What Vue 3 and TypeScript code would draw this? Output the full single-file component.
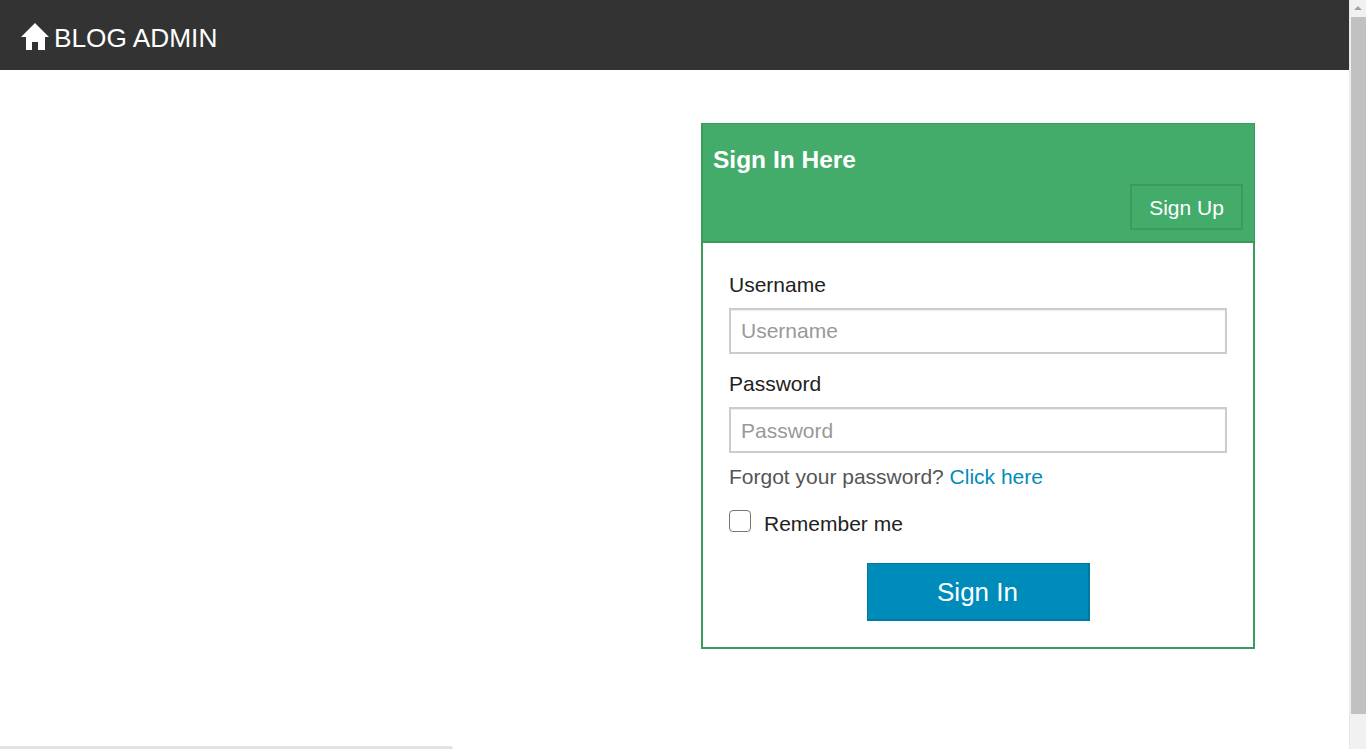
<template>
  <div class="page">
    <div class="content">
      <nav class="navbar">
        <a class="brand" href="#">
          <svg class="home" viewBox="0 0 28 27" aria-hidden="true">
            <path d="M14 0 L28 14 L24 14 L24 27 L17 27 L17 19 L11 19 L11 27 L5 27 L5 14 L0 14 Z" />
          </svg>
          <span>BLOG ADMIN</span>
        </a>
      </nav>

      <main class="main">
        <section class="card">
          <header class="card-head">
            <h3 class="card-title">Sign In Here</h3>
            <div class="head-actions">
              <a class="btn-signup" href="#">Sign Up</a>
            </div>
          </header>

          <form class="card-body" @submit.prevent>
            <label class="label" for="username">Username</label>
            <input id="username" v-model="username" class="input" type="text" placeholder="Username" />

            <label class="label label-pass" for="password">Password</label>
            <input id="password" v-model="password" class="input input-pass" type="password" placeholder="Password" />

            <p class="forgot">Forgot your password? <a href="#">Click here</a></p>

            <label class="remember">
              <input v-model="remember" class="check" type="checkbox" />
              <span>Remember me</span>
            </label>

            <div class="actions">
              <button class="btn-signin" type="submit">Sign In</button>
            </div>
          </form>
        </section>
      </main>

      <div class="footer-strip"></div>
    </div>

    <!-- page scrollbar as it shows in the screenshot -->
    <aside class="scrollbar">
      <span class="arrow"></span>
      <span class="thumb"></span>
    </aside>
  </div>
</template>

<script setup lang="ts">
import { ref } from 'vue';

const username = ref('');
const password = ref('');
const remember = ref(false);
</script>

<style>
html,
body {
  margin: 0;
  overflow: hidden;
}
</style>

<style scoped>
.page {
  display: flex;
  height: 749px;
  font-family: "Liberation Sans", Arial, sans-serif;
  color: #222;
  background: #fff;
  overflow: hidden;
}

.content {
  display: flex;
  flex: 1;
  flex-direction: column;
  min-width: 0;
}

.navbar {
  display: flex;
  align-items: center;
  height: 70px;
  padding-left: 21px;
  background: #333;
}

.brand {
  display: flex;
  align-items: center;
  gap: 5px;
  margin-top: 6px;
  color: #fff;
  font-size: 26.25px;
  text-decoration: none;
}

.home {
  width: 28px;
  height: 27px;
  margin-top: -3px;
  fill: #fff;
}

.main {
  display: flex;
  flex: 1;
  justify-content: flex-end;
  align-items: flex-start;
  padding: 53px 94px 0 0;
}

.card {
  width: 554px;
  box-sizing: border-box;
  border: 2px solid #3c9a5f;
  border-top-width: 1px;
}

.card-head {
  height: 119px;
  box-sizing: border-box;
  margin-right: -1px;
  padding: 10px 11px 10px 10px;
  border-bottom: 2px solid #3c9a5f;
  background: #43ac6a;
  color: #fff;
}

.card-title {
  margin: 14px 0 0;
  font-size: 24.5px;
  line-height: 24px;
  font-weight: 700;
}

.head-actions {
  display: flex;
  justify-content: flex-end;
  margin-top: 12px;
}

.btn-signup {
  box-sizing: border-box;
  width: 113px;
  height: 46px;
  border: 2px solid #3c9a5f;
  color: #fff;
  font-size: 21px;
  line-height: 44px;
  text-align: center;
  text-decoration: none;
}

.card-body {
  display: flex;
  flex-direction: column;
  padding: 30px 26px 26px;
}

.label {
  font-size: 21px;
  line-height: 24px;
}

.label-pass {
  margin-top: 18px;
}

.input {
  box-sizing: border-box;
  width: 100%;
  height: 46px;
  margin-top: 11px;
  padding: 0 10px;
  border: 2px solid #ccc;
  border-radius: 0;
  outline: none;
  box-shadow: inset 0 1px 1px rgba(0, 0, 0, 0.075);
  color: #222;
  font-family: inherit;
  font-size: 21px;
}

.input-pass {
  padding-top: 2px;
}

.input::placeholder {
  color: #999;
  opacity: 1;
}

.forgot {
  margin: 10px 0 0;
  color: #555;
  font-size: 21px;
  line-height: 28px;
}

.forgot a {
  color: #008cba;
  text-decoration: none;
}

.remember {
  display: flex;
  align-items: flex-start;
  gap: 13px;
  margin-top: 19px;
  font-size: 21px;
  line-height: 24px;
}

.remember span {
  margin-top: 2px;
}

.check {
  width: 22px;
  height: 22px;
  margin: 0;
  appearance: none;
  box-sizing: border-box;
  border: 1px solid #767676;
  border-radius: 4px;
  background: #fff;
}

.actions {
  display: flex;
  justify-content: center;
  margin-top: 27px;
}

.btn-signin {
  box-sizing: border-box;
  width: 223px;
  height: 58px;
  padding-top: 3px;
  border-style: solid;
  border-width: 1px 2px 2px 1px;
  border-color: #0079a1;
  background: #008cba;
  color: #fff;
  font-family: inherit;
  font-size: 26px;
  cursor: pointer;
}

.footer-strip {
  flex: none;
  width: 453px;
  height: 3px;
  border-top-right-radius: 3px;
  background: #e0e2e4;
}

.scrollbar {
  display: flex;
  flex: none;
  flex-direction: column;
  align-items: center;
  box-sizing: border-box;
  width: 17px;
  border-left: 1px solid #e8e8e8;
  background: #f1f1f1;
}

.arrow {
  width: 0;
  height: 0;
  margin-top: 6px;
  border-right: 4px solid transparent;
  border-bottom: 4px solid #a3a3a3;
  border-left: 4px solid transparent;
}

.thumb {
  width: 15px;
  height: 697px;
  margin-top: 7px;
  background: #c1c1c1;
}
</style>
